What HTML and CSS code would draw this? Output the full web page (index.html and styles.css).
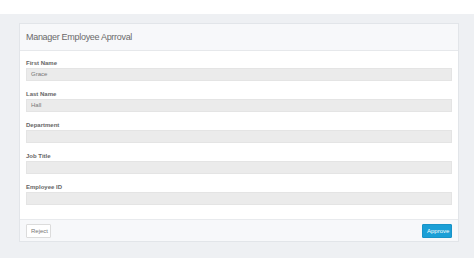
FILE: index.html
```html
<!DOCTYPE html>
<html>
<head>
<meta charset="utf-8">
<link rel="stylesheet" href="styles.css">
</head>
<body>
<div class="wrap">
  <div class="card">
    <div class="card-header">Manager Employee Aprroval</div>
    <div class="card-body">
      <div class="field"><label>First Name</label><div class="input">Grace</div></div>
      <div class="field"><label>Last Name</label><div class="input">Hall</div></div>
      <div class="field"><label>Department</label><div class="input"></div></div>
      <div class="field"><label>Job Title</label><div class="input"></div></div>
      <div class="field"><label>Employee ID</label><div class="input"></div></div>
    </div>
    <div class="card-footer">
      <button class="btn btn-reject">Reject</button>
      <button class="btn btn-approve">Approve</button>
    </div>
  </div>
</div>
</body>
</html>
```
FILE: styles.css
```css
html, body {
  margin: 0;
  padding: 0;
  background: #ffffff;
  font-family: "Liberation Sans", Arial, sans-serif;
}
.wrap {
  margin-top: 14px;
  height: 244px;
  box-sizing: border-box;
  background: #eef0f3;
  padding: 9px 15px 16px 19px;
}
.card {
  background: #ffffff;
  border: 1px solid #e2e5e9;
  box-sizing: border-box;
  height: 219px;
  display: flex;
  flex-direction: column;
}
.card-header {
  height: 27px;
  box-sizing: border-box;
  background: #f7f8fa;
  border-bottom: 1px solid #e6e8eb;
  padding: 0 6px;
  display: flex;
  align-items: center;
  font-size: 9px;
  letter-spacing: -0.3px;
  color: #6a6a6a;
}
.card-body {
  flex: 1;
  padding: 7px 6px 0 6px;
}
.field {
  display: flex;
  flex-direction: column;
  margin-bottom: 8px;
}
.field label {
  font-size: 6px;
  font-weight: bold;
  color: #666;
  line-height: 10px;
  height: 10px;
}
.input {
  height: 13px;
  box-sizing: border-box;
  background: #ebebeb;
  border: 1px solid #e4e4e4;
  font-size: 6px;
  color: #777;
  line-height: 11px;
  padding: 0 4px;
}
.card-footer {
  height: 22px;
  box-sizing: border-box;
  border-top: 1px solid #e8eaed;
  background: #f7f8fa;
  padding: 0 6px;
  display: flex;
  align-items: center;
  justify-content: space-between;
}
.btn {
  font-family: "Liberation Sans", Arial, sans-serif;
  font-size: 6px;
  height: 14px;
  padding: 0 4px;
  border-radius: 1px;
  line-height: 12px;
}
.btn-reject {
  background: #fff;
  border: 1px solid #dcdcdc;
  color: #777;
  width: 25px;
}
.btn-approve {
  background: #1b9fd6;
  border: 1px solid #1893c7;
  color: #fff;
  width: 30px;
}
```
